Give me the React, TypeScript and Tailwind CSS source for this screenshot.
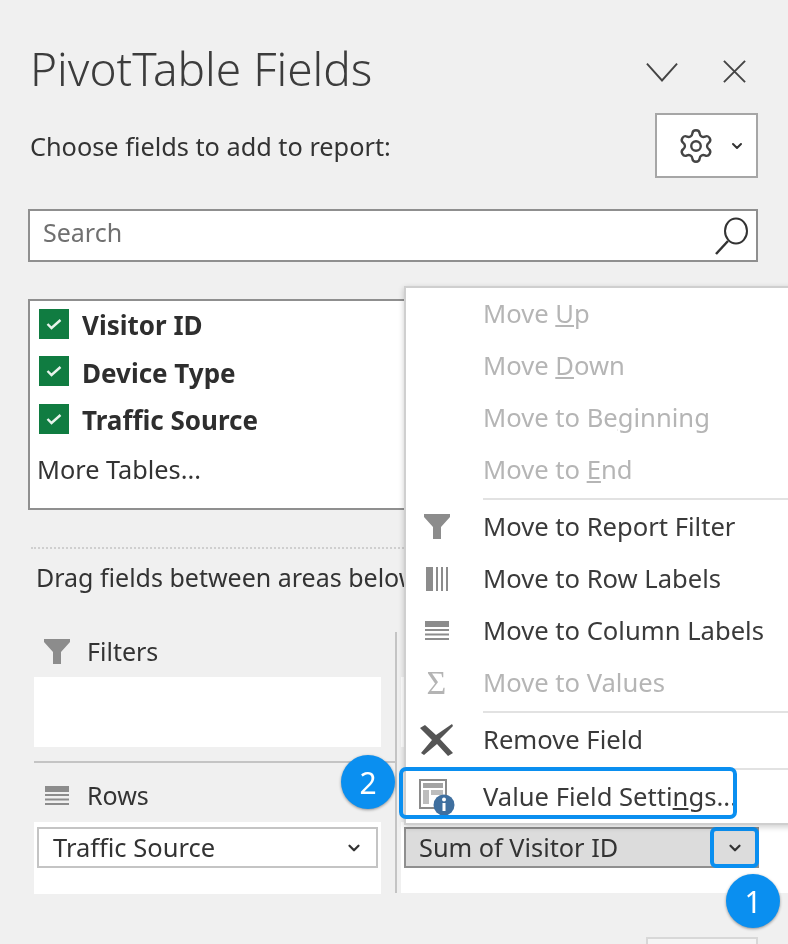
import { ChevronDown, Settings } from 'lucide-react';

const font = "font-['Noto_Sans','Open_Sans',sans-serif]";

interface MenuEntry {
  before: string;
  key?: string;
  after?: string;
  disabled?: boolean;
  icon?: React.ReactNode;
  separator?: boolean;
}

function FilterIcon({ className }: { className?: string }) {
  return (
    <svg viewBox="0 0 26 26" className={className} fill="currentColor">
      <path d="M0 0h26v3l-9 10v12H9V13L0 3z" />
    </svg>
  );
}

function LinesIcon({ className }: { className?: string }) {
  return (
    <svg viewBox="0 0 24 20" className={className} fill="currentColor">
      <rect x="0" y="0" width="24" height="6" />
      <rect x="0" y="8" width="24" height="2" />
      <rect x="0" y="12.500" width="24" height="2" />
      <rect x="0" y="17" width="24" height="2" />
    </svg>
  );
}

function BarsIcon({ className }: { className?: string }) {
  return (
    <svg viewBox="0 0 22 24" className={className} fill="currentColor">
      <rect x="0" y="0" width="7" height="24" />
      <rect x="10" y="0" width="2" height="24" />
      <rect x="15" y="0" width="2" height="24" />
      <rect x="20" y="0" width="2" height="24" />
    </svg>
  );
}

function RemoveIcon() {
  return (
    <svg viewBox="0 0 34 32" className="h-[32px] w-[34px]" fill="#555">
      <path d="M0 4l5-3 11 10L32 0l1 2-13 13 13 14-5 3-11-12L4 31l-3-2 11-13z" />
    </svg>
  );
}

function SettingsInfoIcon() {
  return (
    <svg viewBox="0 0 38 38" className="h-[38px] w-[38px]">
      <rect x="2" y="2" width="26" height="28" fill="#fff" stroke="#8a8a8a" strokeWidth="2" />
      <rect x="5" y="5" width="20" height="5" fill="#a3a3a3" />
      <rect x="5" y="12" width="6" height="14" fill="#bdbdbd" />
      <rect x="13" y="12" width="12" height="5" fill="#bdbdbd" />
      <circle cx="26" cy="27" r="10.500" fill="#3f6f9f" />
      <circle cx="26" cy="21.500" r="2" fill="#fff" />
      <rect x="24.500" y="25" width="3" height="8" fill="#fff" />
    </svg>
  );
}

const menuEntries: MenuEntry[] = [
  { before: 'Move ', key: 'U', after: 'p', disabled: true },
  { before: 'Move ', key: 'D', after: 'own', disabled: true },
  { before: 'Move to Be', key: 'g', after: 'inning', disabled: true },
  { before: 'Move to ', key: 'E', after: 'nd', disabled: true, separator: true },
  { before: 'Move to Report Filter', icon: <FilterIcon className="h-[26px] w-[26px] text-[#8c8c8c]" /> },
  { before: 'Move to Row Labels', icon: <BarsIcon className="h-[24px] w-[22px] text-[#8c8c8c]" /> },
  { before: 'Move to Column Labels', icon: <LinesIcon className="h-[20px] w-[24px] text-[#8c8c8c]" /> },
  {
    before: 'Move to Values',
    disabled: true,
    separator: true,
    icon: <span className="font-['Liberation_Serif',serif] text-[34px] leading-none text-[#b4b4b4]">Σ</span>,
  },
  { before: 'Remove Field', separator: true, icon: <RemoveIcon /> },
  { before: 'Value Field Setti', key: 'n', after: 'gs...', icon: <SettingsInfoIcon /> },
];

const fields = ['Visitor ID', 'Device Type', 'Traffic Source'];

function Badge({ label, className }: { label: string; className: string }) {
  return (
    <div
      className={`absolute flex h-[54px] w-[54px] items-center justify-center rounded-full bg-[#0a8ff0] text-[30px] text-white shadow-[0_1px_3px_rgba(0,0,0,0.4)] ${className}`}
    >
      {label}
    </div>
  );
}

export default function App() {
  return (
    <div className={`relative h-[944px] w-[788px] overflow-hidden bg-[#f0f0f0] text-[#333] blur-[0.4px] ${font}`}>
      <div className="flex h-[105px] items-end justify-between pb-[7px] pl-[30px] pr-[41px]">
        <h1 className="text-[46px] font-light leading-[60px] text-[#3c3c3c]">PivotTable Fields</h1>
        <div className="mb-[14px] flex items-center gap-[44px]">
          <svg viewBox="0 0 34 20" className="h-[20px] w-[32px]" fill="none" stroke="#444" strokeWidth="2">
            <path d="M1 1l16 18L33 1" />
          </svg>
          <svg viewBox="0 0 26 26" className="h-[25px] w-[25px]" fill="none" stroke="#444" strokeWidth="2">
            <path d="M2 2l22 22M24 2L2 24" />
          </svg>
        </div>
      </div>

      <div className="mt-[8px] flex h-[65px] items-center justify-between pl-[30px] pr-[30px]">
        <span className="pt-[3px] text-[25.300px]">Choose fields to add to report:</span>
        <div className="flex h-[65px] w-[103px] items-center justify-center gap-[14px] border-2 border-[#a6a6a6] bg-white pl-[8px]">
          <Settings className="h-[38px] w-[38px] text-[#444]" strokeWidth={1.5} />
          <ChevronDown className="h-[16px] w-[16px] text-[#333]" strokeWidth={3} />
        </div>
      </div>

      <div className="ml-[28px] mr-[30px] mt-[31px] flex h-[53px] items-center justify-between border-2 border-[#8f8f8f] bg-white pl-[13px] pr-[6px]">
        <span className="pb-[6px] text-[25px] text-[#707070]">Search</span>
        <svg viewBox="0 0 36 40" className="h-[40px] w-[36px]" fill="none" stroke="#333" strokeWidth="2">
          <ellipse cx="22" cy="15" rx="11" ry="12.500" />
          <path d="M14 25L2 38" strokeWidth="2.500" />
        </svg>
      </div>

      <div className="ml-[28px] mt-[37px] h-[211px] w-[800px] border-2 border-[#8f8f8f] bg-white pl-[9px] pt-[1px]">
        {fields.map((field) => (
          <div key={field} className="flex h-[47.500px] items-center gap-[13px]">
            <span className="-mt-[4px] flex h-[30px] w-[30px] items-center justify-center bg-[#107c41]">
              <svg viewBox="0 0 16 12" className="h-[12px] w-[16px]" fill="none" stroke="#e8f3ec" strokeWidth="2.400">
                <path d="M1.500 6l4 4 9-8" />
              </svg>
            </span>
            <span className="text-[26px] font-bold text-[#2e2e2e]">{field}</span>
          </div>
        ))}
        <div className="-ml-[2px] mt-[6px] text-[25.300px]">More Tables...</div>
      </div>

      <div className="ml-[31px] mt-[37px] border-t-2 border-dotted border-[#cfcfcf]" />
      <div className="ml-[36px] mt-[9px] h-[38px] whitespace-nowrap text-[25px] leading-[38px]">
        Drag fields between areas below:
      </div>

      <div className="mt-[36px] flex">
        <div className="w-[395px] shrink-0 pl-[34px]">
          <div className="flex h-[45px] items-center gap-[17px] pb-[5px] pl-[10px]">
            <FilterIcon className="h-[26px] w-[26px] text-[#8c8c8c]" />
            <span className="text-[25px]">Filters</span>
          </div>
          <div className="mr-[14px] h-[70px] bg-white" />
          <div className="mt-[14px] border-t-2 border-[#c4c4c4]" />
          <div className="flex h-[59px] items-center gap-[18px] pl-[11px] pt-[6px]">
            <LinesIcon className="h-[20px] w-[24px] text-[#8c8c8c]" />
            <span className="text-[25px]">Rows</span>
          </div>
          <div className="mr-[14px] h-[72px] bg-white px-[3px] pt-[5px]">
            <div className="flex h-[41px] items-center justify-between border-2 border-[#c4c4c4] pl-[14px] pr-[13px]">
              <span className="text-[25.500px]">Traffic Source</span>
              <ChevronDown className="h-[18px] w-[18px] text-[#333]" strokeWidth={3} />
            </div>
          </div>
        </div>
        <div className="h-[261px] w-[2px] shrink-0 bg-[#c4c4c4]" />
        <div className="ml-[4px] min-w-0 flex-1">
          <div className="h-[45px]" />
          <div className="h-[70px] bg-white" />
          <div className="h-[75px]" />
          <div className="h-[71px] bg-white pl-[3px] pt-[5px]">
            <div className="flex h-[41px] w-[355px] items-center justify-between border-2 border-[#8f8f8f] bg-[#dcdcdc] pl-[13px]">
              <span className="text-[25.300px]">Sum of Visitor ID</span>
              <div className="-mr-[2px] flex h-[41px] w-[49px] items-center justify-center rounded-[6px] border-4 border-[#0a8ff0]">
                <ChevronDown className="h-[18px] w-[18px] text-[#333]" strokeWidth={3} />
              </div>
            </div>
          </div>
        </div>
      </div>

      {/* menu opened from the value field */}
      <div className="absolute left-[404px] top-[286px] w-[400px] border-2 border-[#cfcfcf] bg-white shadow-[0_2px_6px_rgba(0,0,0,0.2)]">
        {menuEntries.map((entry) => (
          <div key={entry.before}>
            <div
              className={`flex h-[52px] items-center text-[25.600px] ${entry.disabled ? 'text-[#b5b5b5]' : 'text-[#3a3a3a]'}`}
            >
              <div className="flex w-[77px] shrink-0 items-center justify-center pr-[16px]">{entry.icon}</div>
              <span className="whitespace-nowrap">
                {entry.before}
                {entry.key && <span className="underline">{entry.key}</span>}
                {entry.after}
              </span>
            </div>
            {entry.separator && <div className="my-[1.500px] ml-[77px] border-t-2 border-[#e2e2e2]" />}
          </div>
        ))}
      </div>

      <div className="absolute left-[399px] top-[767px] h-[52px] w-[338px] rounded-[7px] border-4 border-[#0a8ff0]" />
      <Badge label="2" className="left-[341px] top-[755px]" />
      <Badge label="1" className="left-[726px] top-[874px]" />

      <div className="absolute left-[646px] top-[937px] h-[10px] w-[112px] border-2 border-[#d8d8d8] bg-[#f5f5f5]" />
    </div>
  );
}
